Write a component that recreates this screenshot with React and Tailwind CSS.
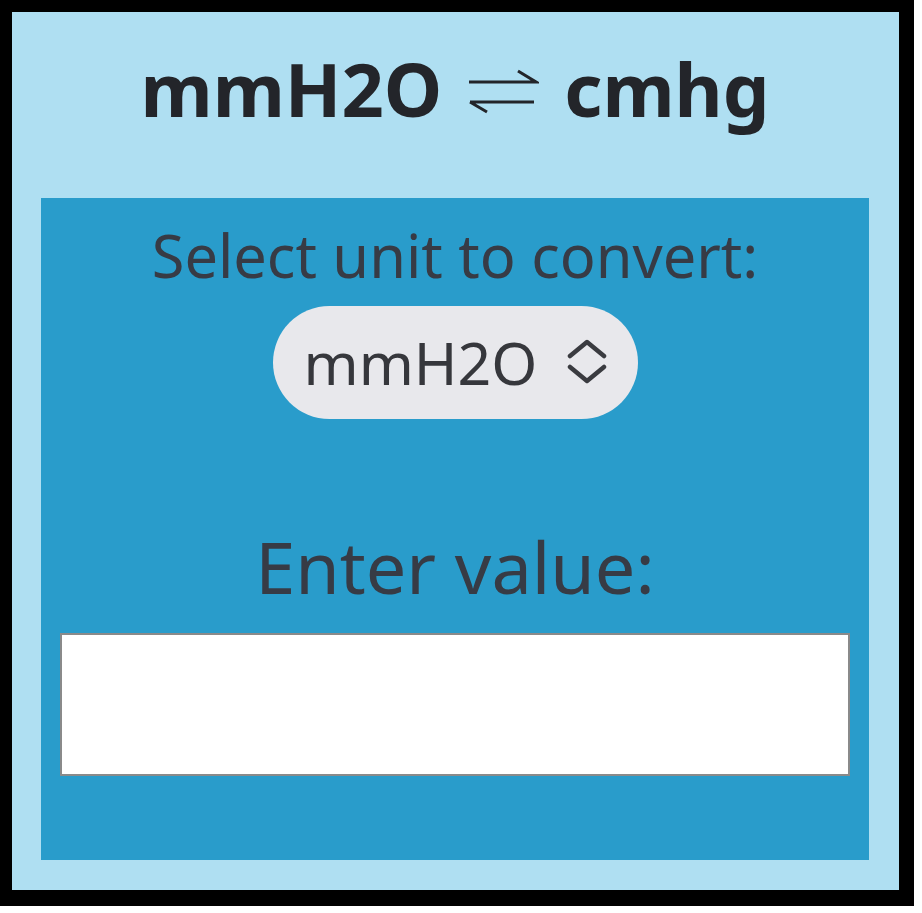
const HarpoonArrows = () => (
  <svg width="72" height="48" viewBox="0 0 72 48" className="mt-[16px] shrink-0" fill="none" stroke="#23252a" strokeWidth="3" strokeLinecap="butt">
    <path d="M2 14 H69 L51 3" />
    <path d="M3 34 H67 M3 34 L20 44" />
  </svg>
);

const UpDown = () => (
  <svg width="40" height="48" viewBox="0 0 40 48" fill="none" stroke="#3a3b40" strokeWidth="4.5" strokeLinecap="round" strokeLinejoin="round">
    <path d="M3 18 L20 4 L37 18" />
    <path d="M3 29 L20 43 L37 29" />
  </svg>
);

export default function App() {
  return (
    <div className="w-[914px] h-[906px] bg-black pl-3 pt-3 pr-[15px] pb-4 font-['Noto_Sans',sans-serif]">
      <div className="h-full bg-[#afdff2] flex flex-col pl-[29px] pr-[30px] pb-[30px]">
        <div className="h-[186px] shrink-0 flex justify-center pt-[40px]">
          <div className="flex items-start gap-[25px] text-[74px] leading-none font-bold text-[#23252a]">
            <span>mmH2O</span>
            <HarpoonArrows />
            <span>cmhg</span>
          </div>
        </div>

        <div className="flex-1 bg-[#299ccb] flex flex-col items-center">
          <label className="mt-[27px] text-[59.5px] leading-none text-[#373b45]">
            Select unit to convert:
          </label>
          <div className="mt-[21px] w-[365px] h-[113px] rounded-full bg-[#e8e8ec] flex items-center pl-[31px] gap-[30px]">
            <span className="text-[59px] leading-none text-[#36373c]">mmH2O</span>
            <UpDown />
          </div>

          <label className="mt-[111px] text-[72px] leading-none text-[#373b45]">
            Enter value:
          </label>
          <input
            type="text"
            className="mt-[31px] w-[790px] h-[143px] bg-white border-2 border-[#8a8a8a] outline-none"
          />
        </div>
      </div>
    </div>
  );
}
